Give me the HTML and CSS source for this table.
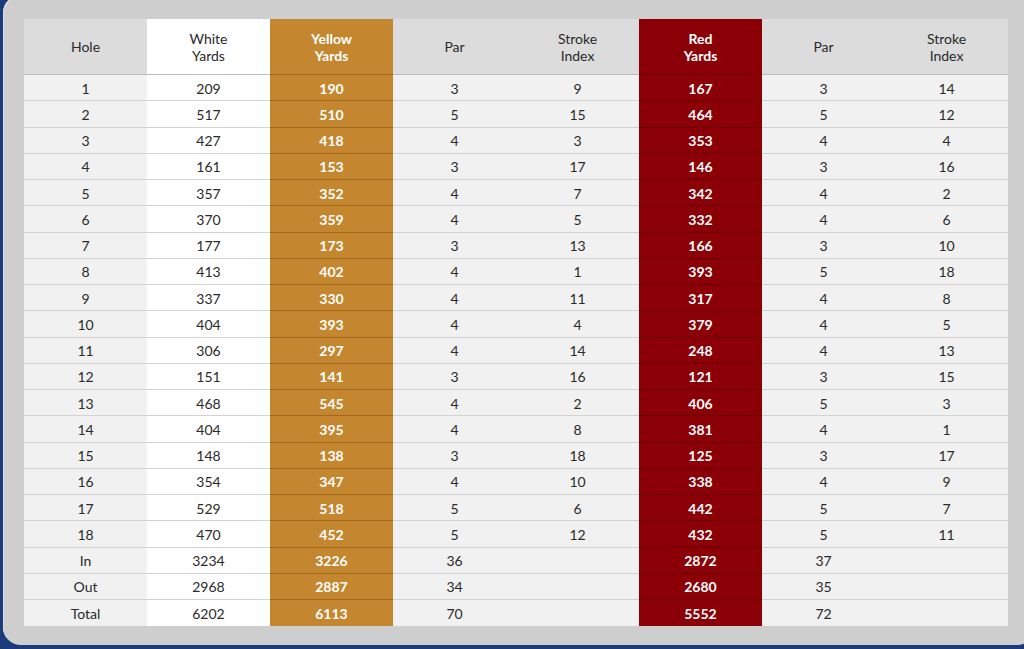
FILE: index.html
```html
<!DOCTYPE html>
<html lang="en">
<head>
<meta charset="utf-8">
<title>Scorecard</title>
<link rel="stylesheet" href="styles.css">
</head>
<body>
<div class="panel">
<table class="card">
<thead>
<tr>
<th>Hole</th>
<th class="white">White<br>Yards</th>
<th class="yellow">Yellow<br>Yards</th>
<th>Par</th>
<th>Stroke<br>Index</th>
<th class="red">Red<br>Yards</th>
<th>Par</th>
<th>Stroke<br>Index</th>
</tr>
</thead>
<tbody>
<tr><td>1</td><td class="white">209</td><td class="yellow">190</td><td>3</td><td>9</td><td class="red">167</td><td>3</td><td>14</td></tr>
<tr><td>2</td><td class="white">517</td><td class="yellow">510</td><td>5</td><td>15</td><td class="red">464</td><td>5</td><td>12</td></tr>
<tr><td>3</td><td class="white">427</td><td class="yellow">418</td><td>4</td><td>3</td><td class="red">353</td><td>4</td><td>4</td></tr>
<tr><td>4</td><td class="white">161</td><td class="yellow">153</td><td>3</td><td>17</td><td class="red">146</td><td>3</td><td>16</td></tr>
<tr><td>5</td><td class="white">357</td><td class="yellow">352</td><td>4</td><td>7</td><td class="red">342</td><td>4</td><td>2</td></tr>
<tr><td>6</td><td class="white">370</td><td class="yellow">359</td><td>4</td><td>5</td><td class="red">332</td><td>4</td><td>6</td></tr>
<tr><td>7</td><td class="white">177</td><td class="yellow">173</td><td>3</td><td>13</td><td class="red">166</td><td>3</td><td>10</td></tr>
<tr><td>8</td><td class="white">413</td><td class="yellow">402</td><td>4</td><td>1</td><td class="red">393</td><td>5</td><td>18</td></tr>
<tr><td>9</td><td class="white">337</td><td class="yellow">330</td><td>4</td><td>11</td><td class="red">317</td><td>4</td><td>8</td></tr>
<tr><td>10</td><td class="white">404</td><td class="yellow">393</td><td>4</td><td>4</td><td class="red">379</td><td>4</td><td>5</td></tr>
<tr><td>11</td><td class="white">306</td><td class="yellow">297</td><td>4</td><td>14</td><td class="red">248</td><td>4</td><td>13</td></tr>
<tr><td>12</td><td class="white">151</td><td class="yellow">141</td><td>3</td><td>16</td><td class="red">121</td><td>3</td><td>15</td></tr>
<tr><td>13</td><td class="white">468</td><td class="yellow">545</td><td>4</td><td>2</td><td class="red">406</td><td>5</td><td>3</td></tr>
<tr><td>14</td><td class="white">404</td><td class="yellow">395</td><td>4</td><td>8</td><td class="red">381</td><td>4</td><td>1</td></tr>
<tr><td>15</td><td class="white">148</td><td class="yellow">138</td><td>3</td><td>18</td><td class="red">125</td><td>3</td><td>17</td></tr>
<tr><td>16</td><td class="white">354</td><td class="yellow">347</td><td>4</td><td>10</td><td class="red">338</td><td>4</td><td>9</td></tr>
<tr><td>17</td><td class="white">529</td><td class="yellow">518</td><td>5</td><td>6</td><td class="red">442</td><td>5</td><td>7</td></tr>
<tr><td>18</td><td class="white">470</td><td class="yellow">452</td><td>5</td><td>12</td><td class="red">432</td><td>5</td><td>11</td></tr>
<tr><td>In</td><td class="white">3234</td><td class="yellow">3226</td><td>36</td><td></td><td class="red">2872</td><td>37</td><td></td></tr>
<tr><td>Out</td><td class="white">2968</td><td class="yellow">2887</td><td>34</td><td></td><td class="red">2680</td><td>35</td><td></td></tr>
<tr><td>Total</td><td class="white">6202</td><td class="yellow">6113</td><td>70</td><td></td><td class="red">5552</td><td>72</td><td></td></tr>
</tbody>
</table>
</div>
</body>
</html>
```

FILE: styles.css
```css
html, body {
  margin: 0;
  padding: 0;
  width: 1024px;
  height: 649px;
  overflow: hidden;
  background: #1c3b7b;
}

.panel {
  margin-left: 3px;
  margin-top: -5px;
  width: 1032px;
  height: 650px;
  box-sizing: border-box;
  padding: 24px 0 0 21px;
  background: #cecece;
  border-radius: 18px;
  box-shadow: inset 1px 1px 0 #dedede;
}

.card {
  border-collapse: collapse;
  table-layout: fixed;
  width: 984px;
  font-family: Lato, "Liberation Sans", sans-serif;
  font-size: 14px;
  color: #2a2a2a;
}

.card th,
.card td {
  width: 123px;
  padding: 0;
  text-align: center;
  background: #f1f1f1;
}

.card th {
  height: 55px;
  font-weight: 400;
  line-height: 17px;
  background: #dcdcdc;
  border-bottom: 1px solid #bdbdbd;
}

.card td {
  height: 26.25px;
  padding-top: 2px;
  box-sizing: border-box;
  line-height: 16px;
  border-top: 1px solid #d3d3d3;
}

.card tbody tr:first-child td {
  border-top: none;
}

.card .white {
  background: #ffffff;
}

.card th.white {
  background: #ffffff;
}

.card .yellow {
  background: #c4872f;
  color: #ffffff;
  font-weight: 700;
  border-color: #a26a1c;
}

.card .red {
  background: #8b0006;
  color: #ffffff;
  font-weight: 700;
  border-color: #680004;
}
```
